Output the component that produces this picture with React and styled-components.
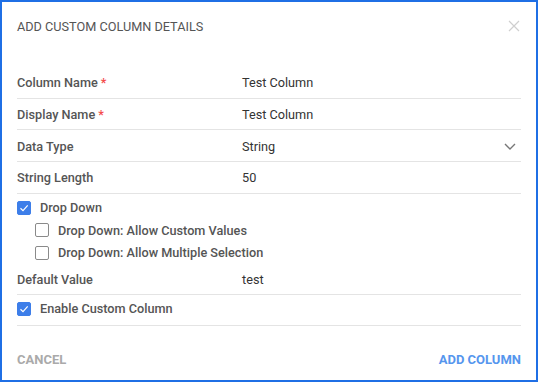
import React from 'react'
import styled, { createGlobalStyle } from 'styled-components'

const Global = createGlobalStyle`
  body {
    margin: 0;
    background: #fff;
    font-family: Roboto, "Liberation Sans", Arial, sans-serif;
  }
`;

const Dialog = styled.div`
  width: 538px;
  height: 382px;
  box-sizing: border-box;
  border: 2px solid #1f6fe5;
  background: #fff;
  padding: 0 15px;
  display: flex;
  flex-direction: column;
`;

const Header = styled.div`
  height: 65px;
  display: flex;
  justify-content: space-between;
  align-items: flex-start;
  padding-top: 17px;
  box-sizing: border-box;
`;

const Title = styled.h2`
  margin: 0;
  font-size: 12.7px;
  line-height: 16px;
  font-weight: 400;
  color: #555;
`;

const Close = styled.button`
  border: none;
  background: none;
  padding: 0;
  margin-top: 0;
  width: 14px;
  height: 14px;
  cursor: pointer;
`;

const Row = styled.div`
  height: 31.67px;
  box-sizing: border-box;
  border-bottom: 1px solid #e4e4e4;
  display: flex;
  align-items: center;
  padding-top: 1px;
`;

const Label = styled.div`
  width: 225px;
  font-size: 12.7px;
  font-weight: 500;
  color: #555;
`;

const Req = styled.span`
  color: #f44b4b;
  margin-left: 3px;
`;

const Value = styled.div`
  flex: 1;
  font-size: 12.7px;
  color: #333;
  display: flex;
  justify-content: space-between;
  align-items: center;
`;

const CheckGroup = styled.div`
  padding-top: 3px;
`;

const CheckRow = styled.label`
  height: 22.4px;
  display: flex;
  align-items: center;
  padding-left: ${p => (p.$indent ? '18px' : '0')};
  box-sizing: border-box;
  ${p => p.$tall && 'border-bottom: 1px solid #e4e4e4; height: 31px; padding-bottom: 3px;'}
`;

const Box = styled.span`
  width: 14px;
  height: 14px;
  box-sizing: border-box;
  border-radius: 2px;
  border: 1px solid ${p => (p.$on ? '#3d7ee9' : '#8a8a8a')};
  background: ${p => (p.$on ? '#3d7ee9' : '#fff')};
  display: flex;
  align-items: center;
  justify-content: center;
  margin-right: 9px;
  flex-shrink: 0;
`;

const CheckText = styled.span`
  font-size: 12.7px;
  font-weight: 500;
  color: #555;
`;

const Footer = styled.div`
  flex: 1;
  display: flex;
  justify-content: space-between;
  align-items: flex-start;
  padding-top: 26px;
  box-sizing: border-box;
`;

const Action = styled.button`
  border: none;
  background: none;
  padding: 0;
  font-family: inherit;
  font-size: 13px;
  line-height: 16px;
  font-weight: 700;
  color: ${p => (p.$primary ? '#5596ee' : '#aaaaaa')};
  cursor: pointer;
`;

const Check = ({ on, indent, tall, children }) => (
  <CheckRow $indent={indent} $tall={tall}>
    <Box $on={on}>
      {on && (
        <svg width="10" height="10" viewBox="0 0 10 10">
          <polyline points="1.5,5.3 4,7.6 8.7,2.4" fill="none" stroke="#fff" strokeWidth="1.2" />
        </svg>
      )}
    </Box>
    <CheckText>{children}</CheckText>
  </CheckRow>
);

const Field = ({ label, required, children }) => (
  <Row>
    <Label>
      {label}
      {required && <Req>*</Req>}
    </Label>
    <Value>{children}</Value>
  </Row>
);

export default function App() {
  return (
    <>
      <Global />
      <Dialog>
        <Header>
          <Title>ADD CUSTOM COLUMN DETAILS</Title>
          <Close aria-label="close">
            <svg width="14" height="14" viewBox="0 0 14 14">
              <path d="M2 2 L12 12 M12 2 L2 12" stroke="#cfcfcf" strokeWidth="1.2" />
            </svg>
          </Close>
        </Header>
        <Field label="Column Name" required>Test Column</Field>
        <Field label="Display Name" required>Test Column</Field>
        <Field label="Data Type">
          String
          <svg width="12" height="8" viewBox="0 0 12 8" style={{ marginRight: 5 }}>
            <polyline points="1,2 6,7 11,2" fill="none" stroke="#777" strokeWidth="1.4" />
          </svg>
        </Field>
        <Field label="String Length">50</Field>
        <CheckGroup>
          <Check on>Drop Down</Check>
          <Check indent>Drop Down: Allow Custom Values</Check>
          <Check indent>Drop Down: Allow Multiple Selection</Check>
        </CheckGroup>
        <Field label="Default Value">test</Field>
        <Check on tall>Enable Custom Column</Check>
        <Footer>
          <Action>CANCEL</Action>
          <Action $primary>ADD COLUMN</Action>
        </Footer>
      </Dialog>
    </>
  )
}
